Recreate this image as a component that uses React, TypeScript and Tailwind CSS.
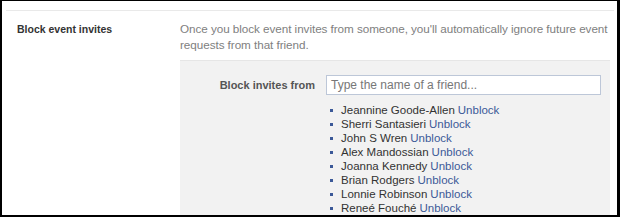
import React from "react";

const names = [
  "Jeannine Goode-Allen",
  "Sherri Santasieri",
  "John S Wren",
  "Alex Mandossian",
  "Joanna Kennedy",
  "Brian Rodgers",
  "Lonnie Robinson",
  "Reneé Fouché",
];

export default function App() {
  return (
    <div className="w-[620px] h-[217px] overflow-hidden bg-white border-black border-t border-l-2 border-r-[3px] border-b-2 font-['Liberation_Sans',Arial,sans-serif]">
      <div className="pt-[9px] pl-[4px] pr-[3px]">
        <div className="border-t border-[#e9e9e9] flex">
          <div className="w-[174px] shrink-0 pl-[11px] pt-[11px] text-[10.5px] leading-[14px] font-bold text-[#333]">
            Block event invites
          </div>
          <div className="flex-1 min-w-0 pr-[4px]">
            <p className="pt-[10px] whitespace-nowrap text-[11.7px] tracking-[-0.05px] leading-[16px] text-[#808080]">
              Once you block event invites from someone, you'll automatically ignore future event
              <br />
              requests from that friend.
            </p>
            <div className="mt-[7px] h-[200px] bg-[#f2f2f2] border-t border-[#e6e6e6] pt-[14px] flex">
              <div className="w-[135px] shrink-0 pt-[3px] text-right text-[11px] leading-[14px] font-bold text-[#555]">
                Block invites from
              </div>
              <div className="ml-[11px] flex flex-col">
                <div className="w-[275px] h-[20px] bg-white border border-[#bdc7d8] pl-[4px] text-[12px] leading-[18px] text-[#777]">
                  Type the name of a friend...
                </div>
                <ul className="mt-[8px]">
                  {names.map((n) => (
                    <li key={n} className="flex items-center h-[14px] text-[11.5px] leading-[14px] text-[#333]">
                      <span className="ml-[4px] w-[3px] h-[3px] bg-[#3b5998] mr-[8px]" />
                      <span>{n}</span>
                      <span className="ml-[3px] text-[#3b5998]">Unblock</span>
                    </li>
                  ))}
                </ul>
              </div>
            </div>
          </div>
        </div>
      </div>
    </div>
  );
}
